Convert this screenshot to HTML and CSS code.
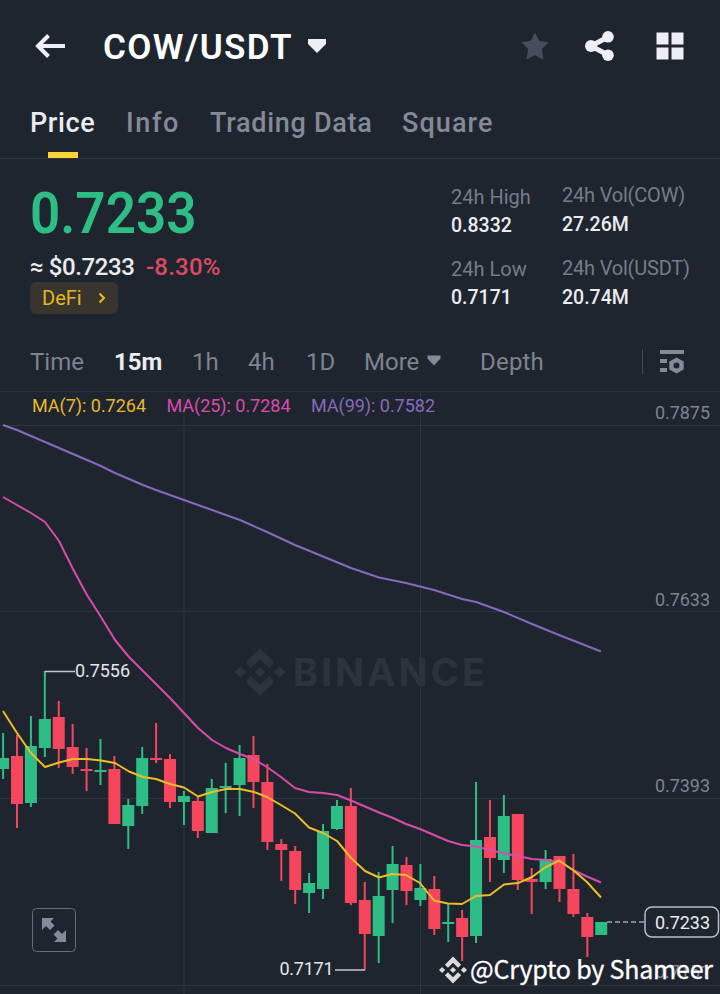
FILE: index.html
```html
<!DOCTYPE html>
<html lang="en">
<head>
  <meta charset="UTF-8">
  <title>COW/USDT</title>
  <meta name="viewport" content="width=device-width, initial-scale=1.0" />
  <link rel="stylesheet" href="styles.css">
</head>
<body>

  <header class="topbar">
    <svg class="back" width="32" height="26" viewBox="0 0 32 26"><path d="M31 13H4M14.500 2.500L4 13l10.500 10.500" /></svg>
    <h1>COW/USDT</h1>
    <svg class="caret" width="20" height="16" viewBox="0 0 20 16"><path d="M1 1h18v5l-9 9-9-9z" /></svg>
    <div class="actions">
      <svg width="32" height="32" viewBox="0 0 32 32"><path class="star" d="M16 2.500l4.200 8.300 9.300 1.500-6.600 6.700 1.500 10.500-8.400-4.300-8.400 4.300 1.500-10.500-6.600-6.700 9.300-1.500z" /></svg>
      <svg width="32" height="32" viewBox="0 0 32 32">
        <path class="share-line" d="M24 7L7 16l17 9" />
        <circle cx="24" cy="6.800" r="5.800" /><circle cx="7" cy="16" r="6" /><circle cx="24" cy="25.200" r="5.800" />
      </svg>
      <svg width="28" height="28" viewBox="0 0 28 28"><path d="M0.500 0.500h12v12h-12zM15.500 0.500h12v12h-12zM0.500 15.500h12v12h-12zM15.500 15.500h12v12h-12z" /></svg>
    </div>
  </header>

  <nav class="tabs">
    <a class="tab active">Price</a>
    <a class="tab info">Info</a>
    <a class="tab trading">Trading Data</a>
    <a class="tab square">Square</a>
  </nav>

  <section class="summary">
    <div class="quote">
      <div class="price">0.7233</div>
      <div class="fiat"><span class="approx">≈ $0.7233</span><span class="change">-8.30%</span></div>
      <div class="tag">DeFi <svg width="8" height="12" viewBox="0 0 8 12"><path d="M1.500 1.500L6 6l-4.500 4.500" /></svg></div>
    </div>
    <dl class="stats">
      <div><dt>24h High</dt><dd>0.8332</dd></div>
      <div><dt>24h Low</dt><dd>0.7171</dd></div>
    </dl>
    <dl class="stats volume">
      <div><dt>24h Vol(COW)</dt><dd>27.26M</dd></div>
      <div><dt>24h Vol(USDT)</dt><dd>20.74M</dd></div>
    </dl>
  </section>

  <nav class="intervals">
    <span class="time">Time</span>
    <span class="m15">15m</span>
    <span class="h1">1h</span>
    <span class="h4">4h</span>
    <span class="d1">1D</span>
    <span class="more">More</span>
    <svg class="more-caret" width="14" height="11" viewBox="0 0 14 11"><path d="M0.500 0.500h13v3L7 10.500l-6.500-7z" /></svg>
    <span class="depth">Depth</span>
    <svg class="settings" width="24" height="25" viewBox="0 0 24 25">
      <path d="M0 1h24v4H0zM0 10h7v4H0zM0 19h7v4H0z" />
      <path fill-rule="evenodd" d="M16.500 8.500l7.200 4v8l-7.200 4-7.200-4v-8zM16.500 13.500a3 3 0 1 0 0 6 3 3 0 0 0 0-6z" />
    </svg>
  </nav>

  <svg class="chart" width="720" height="603" viewBox="0 391 720 603">
    <defs>
      <symbol id="logo" viewBox="0 0 50 50">
        <path d="M25 1l14.500 14.500-5.500 5.500-9-9-9 9-5.500-5.500zM25 49l14.500-14.500-5.500-5.500-9 9-9-9-5.500 5.500zM25 19.500l5.500 5.500-5.500 5.500-5.500-5.500zM5.500 19.500L11 25l-5.500 5.500L0 25zM44.500 19.500L50 25l-5.500 5.500L39 25z" />
      </symbol>
    </defs>
    <path class="grid" d="M0 391.500h720M0 425.500h720M0 611.500h720M0 798.500h720M0 985.500h720M184 391v603M420.500 391v603" />
    <g class="watermark">
      <use href="#logo" x="235" y="647" width="50" height="50" />
      <text x="293" y="685.500" textLength="192">BINANCE</text>
    </g>

    <g class="axis">
      <text x="655" y="419" textLength="55">0.7875</text>
      <text x="655" y="606" textLength="55">0.7633</text>
      <text x="655" y="792" textLength="55">0.7393</text>
      <text x="655" y="978" textLength="55">0.7151</text>
    </g>

    <g id="candles"></g>
    <polyline class="line ma99" points="3,425 17,430 31,436 45,442 59,448 73,454 87,460 101,466 115,473 129,479 143,485 156,490 184,500 212,510 240,520 267,532 295,545 323,556.500 351,568 379,577.500 406,583 434,590 462,599 476,602 504,612 532,624 559,635 587,646 601,651.500" />
    <polyline class="line ma25" points="3,497 17,505 31,513 45,522 59,541 73,569 87,595 101,617 115,640 129,657 143,671 156,684 170,698 184,713 198,728 212,740 226,748 240,754 253,759 267,767 281,777 295,788 309,792 323,793 337,795 351,800.500 365,806.500 379,812.500 393,818 406,824 420,829 434,835 448,841 462,845 476,846.500 490,850 504,853.500 518,856 532,859 546,860 560,862 573,870 587,876.500 601,882.500" />
    <polyline class="line ma7" points="3,711 17,733 31,753 45,767 59,762.500 73,759 87,759 101,760.500 115,763 129,771.500 143,777 156,779 170,784 184,787.500 198,796.500 212,792 226,789 240,789 254,792 267,797 281,805 295,813.500 309,827.500 323,833 337,841 351,858 365,871 379,877.500 392,874 406,875 420,883 434,900.500 448,903.500 462,904 476,896 490,895 504,884.500 518,883 532,877 545,867.500 559,860.500 573,870 587,882 601,897.500" />

    <g class="legend">
      <text class="l7" x="32" y="412" textLength="114">MA(7): 0.7264</text>
      <text class="l25" x="166.500" y="412" textLength="124">MA(25): 0.7284</text>
      <text class="l99" x="311" y="412" textLength="124">MA(99): 0.7582</text>
    </g>

    <g class="marks">
      <path d="M45 671.500h30M335 970h30" />
      <text x="75" y="677" textLength="55">0.7556</text>
      <text x="279.500" y="975" textLength="54">0.7171</text>
    </g>

    <g class="last">
      <path d="M607 922h38" />
      <rect x="645" y="907" width="73.500" height="30" rx="7" />
      <text x="655" y="929" textLength="55">0.7233</text>
    </g>

    <g class="expand">
      <rect x="32.500" y="908.500" width="43" height="43" rx="4" />
      <path d="M42 918h12l-3.500 3.500 4 4-4.500 4.500-4-4-4 4zM66 942H54l3.500-3.500-4-4L58 930l4 4 4-4z" />
    </g>

    <g class="author">
      <use href="#logo" x="439" y="956" width="28" height="28" />
      <text x="470" y="979" textLength="243">@Crypto by Shameer</text>
    </g>
  </svg>

<script>
  // up (1) / down (0), high, body top, body bottom, low
  const candles = [
    [1, 733, 758, 769, 779], [0, 735, 756, 804, 828], [1, 716, 746, 803, 807], [1, 671, 719, 748, 757],
    [0, 701, 717, 749, 768], [0, 724, 747, 767, 774], [0, 748, 769, 771, 791], [1, 739, 770, 772, 785],
    [0, 756, 769, 824, 824], [1, 799, 805, 826, 849], [1, 747, 758, 806, 814], [0, 723, 758, 760, 763],
    [0, 754, 759, 802, 808], [1, 791, 796, 802, 825], [0, 797, 801, 831, 838], [1, 779, 788, 833, 833],
    [1, 763, 786, 788, 813], [1, 745, 758, 785, 816], [0, 736, 755, 782, 808], [0, 764, 782, 842, 850],
    [0, 839, 844, 850, 881], [0, 846, 851, 890, 904], [1, 873, 883, 893, 913], [1, 824, 831, 889, 899],
    [1, 800, 806, 829, 830], [0, 788, 806, 903, 905], [0, 882, 900, 934, 970], [1, 872, 896, 936, 963],
    [1, 846, 864, 890, 923], [0, 857, 865, 891, 905], [1, 864, 888, 900, 906], [0, 876, 889, 929, 935],
    [1, 904, 922, 924, 942], [0, 910, 918, 937, 961], [1, 782, 840, 936, 943], [0, 800, 837, 858, 882],
    [1, 795, 816, 860, 873], [0, 814, 814, 880, 890], [0, 868, 879, 882, 914], [1, 850, 859, 882, 889],
    [0, 856, 856, 889, 902], [0, 854, 889, 914, 917], [0, 913, 917, 937, 957], [1, 922, 922, 935, 935]
  ];
  const step = 13.91;

  document.getElementById('candles').innerHTML = candles.map(([up, high, top, bottom, low], i) => {
    const x = 3.1 + i * step;
    return `<g class="${up ? 'up' : 'down'}">
      <rect x="${x - 1}" y="${high}" width="2" height="${low - high}" />
      <rect x="${x - 6}" y="${top}" width="12" height="${bottom - top}" />
    </g>`;
  }).join('');
</script>

</body>
</html>
```
FILE: styles.css
```css
* {
  box-sizing: border-box;
}

body {
  margin: 0;
  width: 720px;
  height: 994px;
  overflow: hidden;
  background: #1f252f;
  color: #eaecef;
  font-family: Roboto, sans-serif;
}

svg {
  display: block;
  flex: none;
}

.topbar {
  display: flex;
  align-items: center;
  height: 92px;
  padding: 0 36px 0 34px;
}

.topbar svg {
  fill: #eeeef4;
}

.topbar .back {
  fill: none;
  stroke: #eeeef4;
  stroke-width: 4;
}

h1 {
  margin: 4px 0 0 37px;
  width: 190px;
  font-size: 35px;
  line-height: 40px;
  font-weight: 600;
  letter-spacing: 1.4px;
  color: #fff;
  white-space: nowrap;
}

.caret {
  margin-left: 14px;
}

.actions {
  display: flex;
  align-items: center;
  margin-left: auto;
  gap: 33px;
}

.actions svg:last-child {
  margin-left: 7px;
}

.topbar .star {
  fill: #474d5c;
}

.share-line {
  fill: none;
  stroke: #eeeef4;
  stroke-width: 5;
}

.tabs {
  display: flex;
  height: 67px;
  padding: 13px 30px 0;
  border-bottom: 1px solid #313843;
  font-size: 27px;
  line-height: 36px;
  font-weight: 500;
  letter-spacing: 0.6px;
  color: #848a98;
}

.tab {
  position: relative;
  white-space: nowrap;
}

.active {
  width: 96px;
  color: #eaecef;
}

.info {
  width: 84px;
  letter-spacing: 1.6px;
}

.trading {
  width: 192px;
  letter-spacing: 0.7px;
}

.square {
  letter-spacing: 1.1px;
}

.active::after {
  content: "";
  position: absolute;
  left: 18px;
  bottom: 0;
  width: 30px;
  height: 6px;
  background: #fcd535;
}

.summary {
  display: flex;
  height: 176px;
  padding-left: 30px;
}

.quote {
  width: 421px;
}

.price {
  padding-top: 23px;
  font-size: 57px;
  line-height: 64px;
  font-weight: 600;
  color: #2ebd85;
  transform: scaleX(0.93);
  transform-origin: left;
}

.fiat {
  display: flex;
  margin-top: 6px;
  gap: 12px;
  font-size: 24px;
  line-height: 30px;
  font-weight: 500;
  white-space: nowrap;
}

.approx {
  width: 104px;
  letter-spacing: -0.4px;
}

.change {
  letter-spacing: 0.2px;
  color: #dc4a62;
}

.tag {
  display: flex;
  align-items: center;
  justify-content: space-between;
  width: 88px;
  height: 32px;
  padding: 0 12px;
  border-radius: 6px;
  background: #37352d;
  color: #e8b51c;
  font-size: 20px;
}

.tag path {
  fill: none;
  stroke: #e8b51c;
  stroke-width: 2.2;
}

.stats {
  display: flex;
  flex-direction: column;
  gap: 16px;
  width: 111px;
  margin: 0;
  padding-top: 24px;
  white-space: nowrap;
}

.volume {
  padding-top: 22px;
}

.volume dt {
  letter-spacing: -0.2px;
}

dt {
  font-size: 20px;
  line-height: 28px;
  color: #767c88;
}

dd {
  margin: 0;
  padding-top: 1px;
  font-size: 19.5px;
  line-height: 27px;
  font-weight: 500;
}

.volume dd {
  padding-top: 2px;
}

.intervals {
  display: flex;
  align-items: center;
  height: 56px;
  padding: 0 36px 4px 30px;
  font-size: 24px;
  color: #7d838f;
}

.intervals span {
  padding-top: 2px;
}

.time { width: 84px; }
.m15 { width: 78px; font-weight: 700; color: #eaecef; }
.h1 { width: 56px; }
.h4 { width: 58px; }
.d1 { width: 58px; }
.more { width: 63px; }
.depth { margin-left: 39px; letter-spacing: 0.2px; }

.intervals svg {
  fill: #848a98;
}

.more-caret {
  margin-bottom: 2px;
}

.settings {
  box-sizing: content-box;
  margin-left: auto;
  padding-left: 17px;
  border-left: 1px solid #454b56;
}

.grid {
  fill: none;
  stroke: #2d343e;
}

.watermark {
  fill: #2d333d;
  font: 700 38px Inter, sans-serif;
}

.axis {
  fill: #7d838f;
  font-size: 18px;
}

.up {
  fill: #2ebd85;
}

.down {
  fill: #f6465d;
}

.line {
  fill: none;
  stroke-width: 2;
  stroke-linejoin: round;
}

.ma7 { stroke: #eebc26; }
.ma25 { stroke: #d94bab; }
.ma99 { stroke: #8769bd; }

.legend,
.marks {
  font-size: 18px;
}

.l7 { fill: #e5b92c; }
.l25 { fill: #d94bab; }
.l99 { fill: #8769bd; }

.marks {
  fill: #e3e6ea;
}

.marks path {
  stroke: #c4c8ce;
  stroke-width: 1.5;
}

.last {
  fill: #eaecef;
  font-size: 18px;
}

.last path {
  stroke: #a0a5ae;
  stroke-width: 1.5;
  stroke-dasharray: 5 3;
}

.last rect {
  fill: #1f252f;
  stroke: #b7bdc6;
  stroke-width: 1.5;
}

.expand {
  fill: #848a9a;
}

.expand rect {
  fill: none;
  stroke: #666c78;
}

.author {
  fill: #fff;
  font: 400 25px "Noto Sans CJK SC", sans-serif;
  stroke: #fff;
  stroke-width: 0.3;
}

.author use {
  fill: #dcdcdc;
  stroke: none;
}
```
